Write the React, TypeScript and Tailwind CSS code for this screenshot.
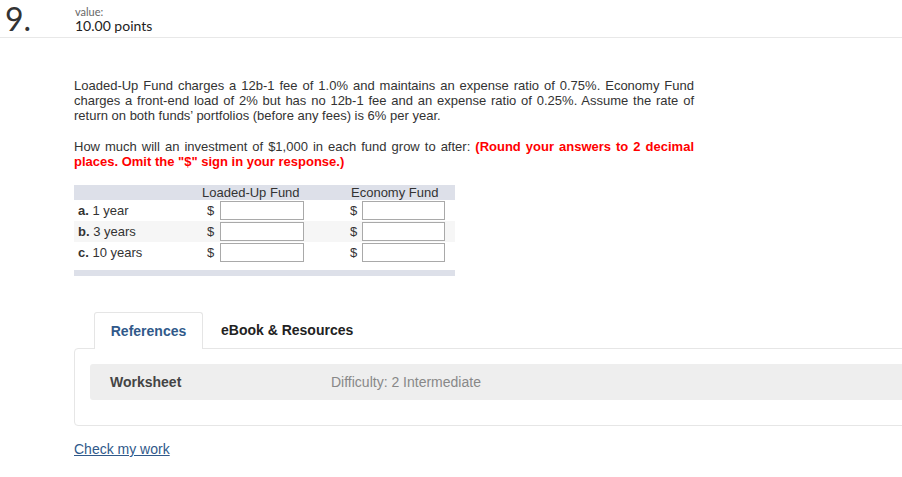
import React from "react";

const arial = { fontFamily: '"Liberation Sans", Arial, sans-serif' };

function Row({ label, rest, shaded }: { label: string; rest: string; shaded?: boolean }) {
  return (
    <div className={`flex items-center h-[21px] ${shaded ? "bg-[#f6f6f6]" : ""}`}>
      <div className="w-[133px] pl-[4px] text-[13px] text-[#333]">
        <span className="font-bold">{label}</span> {rest}
      </div>
      <div className="w-[13px] text-[13px] text-[#333]">$</div>
      <div className="w-[84px] h-[19px] border border-[#a9a9a9] bg-white"></div>
      <div className="w-[46px]"></div>
      <div className="w-[12px] text-[13px] text-[#333]">$</div>
      <div className="w-[83px] h-[19px] border border-[#a9a9a9] bg-white"></div>
    </div>
  );
}

export default function App() {
  return (
    <div className="w-[902px] h-[477px] overflow-hidden bg-white text-[#333]" style={arial}>
      {/* header */}
      <div className="flex h-[38px] border-b border-[#e8e8e8]" style={{ fontFamily: 'Lato, "Liberation Sans", sans-serif' }}>
        <div className="w-[75px] pl-[5px] pt-[1px] text-[32px] font-normal leading-[36px] text-[#333]">9.</div>
        <div className="flex flex-col pt-[5px]">
          <div className="text-[11px] leading-[13px] text-[#666]">value:</div>
          <div className="text-[14px] leading-[16px] text-[#222]">10.00 points</div>
        </div>
      </div>

      <div className="pl-[74px]">
        <div className="w-[620px] mt-[40px] text-[13px] leading-[15px] text-[#333] text-justify">
          <p>
            Loaded-Up Fund charges a 12b-1 fee of 1.0% and maintains an expense ratio of 0.75%. Economy Fund
            charges a front-end load of 2% but has no 12b-1 fee and an expense ratio of 0.25%. Assume the rate of
            return on both funds’ portfolios (before any fees) is 6% per year.
          </p>
          <p className="mt-[16px]">
            How much will an investment of $1,000 in each fund grow to after:{" "}
            <span className="font-bold text-[#ff0000]">
              (Round your answers to 2 decimal places. Omit the "$" sign in your response.)
            </span>
          </p>
        </div>

        {/* table */}
        <div className="w-[381px] mt-[16px]">
          <div className="flex h-[15px] bg-[#dde0e9] text-[13px] leading-[15px] text-[#333]">
            <div className="w-[128px]"></div>
            <div className="w-[149px]">Loaded-Up Fund</div>
            <div>Economy Fund</div>
          </div>
          <Row label="a." rest="1 year" />
          <Row label="b." rest="3 years" shaded />
          <Row label="c." rest="10 years" />
          <div className="h-[6px] mt-[7px] bg-[#dde0e9]"></div>
        </div>

        {/* tabs */}
        <div className="mt-[36px] flex pl-[20px] relative z-10">
          <div className="w-[109px] h-[37px] border border-b-0 border-[#e5e5e5] rounded-t-[3px] bg-white flex items-center justify-center text-[14px] font-bold text-[#30598a] -mb-[1px]">
            References
          </div>
          <div className="h-[36px] pl-[18px] flex items-center text-[14px] font-bold text-[#222]">
            eBook &amp; Resources
          </div>
        </div>
        <div className="w-[860px] border border-[#e6e6e6] rounded-[4px] pt-[15px] pl-[15px] pb-[25px]">
          <div className="h-[36px] bg-[#eeeeee] rounded-[3px] flex items-center pl-[20px] text-[14px]">
            <div className="w-[221px] font-bold text-[#444]">Worksheet</div>
            <div className="text-[#888]">Difficulty: 2 Intermediate</div>
          </div>
        </div>

        <div className="mt-[15px] leading-[16px]">
          <a className="text-[14px] leading-[16px] underline text-[#30598a]" href="#">
            Check my work
          </a>
        </div>
      </div>
    </div>
  );
}
